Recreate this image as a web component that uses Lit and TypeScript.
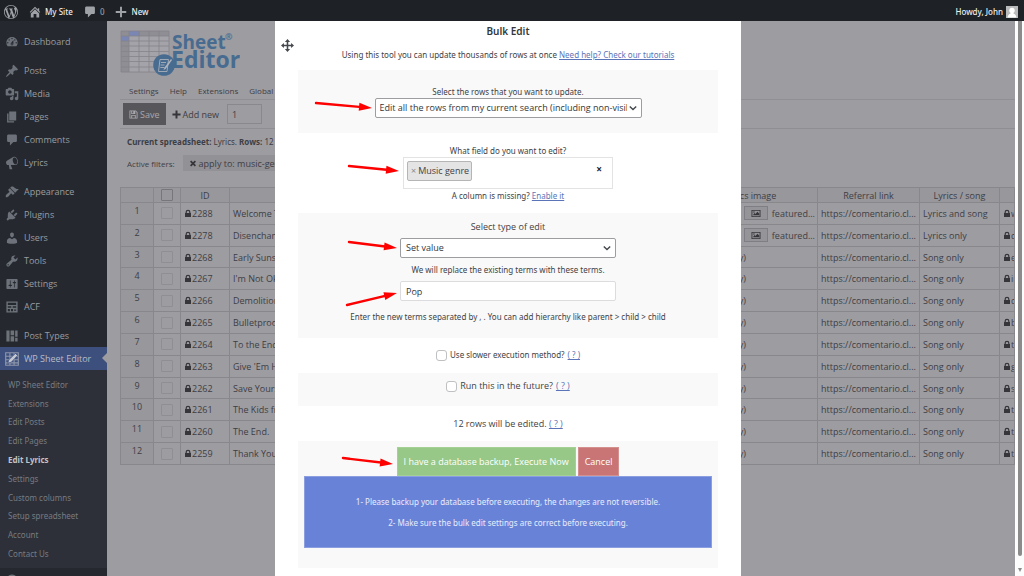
import { LitElement, html, css, svg } from "lit";
import { customElement } from "lit/decorators.js";
import { classMap } from "lit/directives/class-map.js";

const GLYPHS: Record<string, string> = {
  wordpress: "M20 10c0-5.51-4.49-10-10-10C4.48 0 0 4.49 0 10c0 5.52 4.48 10 10 10 5.51 0 10-4.48 10-10zM7.78 15.37L4.37 6.22c.55-.02 1.17-.08 1.17-.08.5-.06.44-1.13-.06-1.11 0 0-1.45.11-2.37.11-.18 0-.37 0-.58-.01C4.12 2.69 6.87 1.11 10 1.11c2.33 0 4.45.87 6.05 2.34-.68-.11-1.65.39-1.65 1.58 0 .74.45 1.36.9 2.1.35.61.55 1.36.55 2.46 0 1.49-1.4 5-1.4 5l-3.03-8.37c.54-.02.82-.17.82-.17.5-.05.44-1.25-.06-1.22 0 0-1.44.12-2.38.12-.87 0-2.33-.12-2.33-.12-.5-.03-.56 1.2-.06 1.22l.92.08 1.26 3.41zM17.41 10c.24-.64.74-1.87.43-4.25.7 1.29 1.05 2.71 1.05 4.25 0 3.29-1.73 6.24-4.4 7.78.97-2.59 1.94-5.2 2.92-7.78zM6.1 18.09C3.12 16.65 1.11 13.53 1.11 10c0-1.3.23-2.48.72-3.59C3.25 10.3 4.67 14.2 6.1 18.09zm4.03-6.63l2.58 6.98c-.86.29-1.76.45-2.71.45-.79 0-1.57-.11-2.29-.33.81-2.38 1.62-4.74 2.42-7.1z",
  home: "M16 8.5l1.53 1.53-1.06 1.06L10 4.6l-6.47 6.49-1.06-1.06L10 2.5l4 4v-2h2v4zm-6-2.46l6 5.99V18H12v-5H8v5H4v-5.97z",
  plus: "M17.5 8.6v2.8h-6.1v6.1H8.6v-6.1H2.5V8.6h6.1V2.5h2.8v6.1z",
  dashboard: "M3.76 16h12.48c1.1-1.37 1.76-3.11 1.76-5 0-4.42-3.58-8-8-8s-8 3.58-8 8c0 1.89.66 3.63 1.76 5zM10 4c.55 0 1 .45 1 1s-.45 1-1 1-1-.45-1-1 .45-1 1-1zM6 6c.55 0 1 .45 1 1s-.45 1-1 1-1-.45-1-1 .45-1 1-1zm8 0c.55 0 1 .45 1 1s-.45 1-1 1-1-.45-1-1 .45-1 1-1zm-5.37 5.55L12 7v6c0 1.1-.9 2-2 2s-2-.9-2-2c0-.57.24-1.08.63-1.45zM4 10c.55 0 1 .45 1 1s-.45 1-1 1-1-.45-1-1 .45-1 1-1zm12 0c.55 0 1 .45 1 1s-.45 1-1 1-1-.45-1-1 .45-1 1-1zm-5 3c0-.55-.45-1-1-1s-1 .45-1 1 .45 1 1 1 1-.45 1-1z",
  post: "M10.44 3.02l1.82-1.82 6.36 6.35-1.83 1.82c-1.05-.68-2.48-.57-3.41.36l-.75.75c-.92.93-1.04 2.35-.35 3.41l-1.83 1.82-2.41-2.41-2.8 2.79c-.42.42-3.38 2.71-3.8 2.29s1.86-3.39 2.28-3.81l2.79-2.79L4.1 9.36l1.83-1.82c1.05.69 2.48.57 3.4-.36l.75-.75c.93-.92 1.05-2.35.36-3.41z",
  media: "M13 11V4c0-.55-.45-1-1-1h-1.67L9 1H5L3.67 3H2c-.55 0-1 .45-1 1v7c0 .55.45 1 1 1h10c.55 0 1-.45 1-1zM7 4.5c1.38 0 2.5 1.12 2.5 2.5S8.38 9.5 7 9.5 4.5 8.38 4.5 7 5.62 4.5 7 4.5zM14 6h5v10.5c0 1.38-1.12 2.5-2.5 2.5S14 17.88 14 16.5s1.12-2.5 2.5-2.5c.17 0 .34.02.5.05V9h-3V6zm-4 8.05V13h2v3.5c0 1.38-1.12 2.5-2.5 2.5S7 17.88 7 16.5 8.12 14 9.5 14c.17 0 .34.02.5.05z",
  page: "M6 15V2h10v13H6zm-1 1h8v2H3V5h2v11z",
  comment: "M5 2h10c1.1 0 2 .9 2 2v7c0 1.1-.9 2-2 2h-3l-5 5v-5H5c-1.1 0-2-.9-2-2V4c0-1.1.9-2 2-2z",
  megaphone: "M18.15 5.94c.46 1.62.38 3.22-.02 4.48-.42 1.28-1.26 2.18-2.3 2.48-.16.06-.26.06-.4.06-.06.02-.12.02-.18.02-.06.02-.14.02-.22.02h-6.8l2.22 5.5c.02.14-.06.26-.14.34-.08.1-.24.16-.34.16H6.95c-.1 0-.26-.06-.34-.16-.08-.08-.16-.2-.14-.34l-1-5.5H4.25l-.02-.02c-.5.06-1.08-.18-1.54-.62s-.88-1.08-1.06-1.88c-.24-.8-.2-1.56-.02-2.2.18-.62.58-1.08 1.06-1.3l.02-.02 9-5.4c.1-.06.18-.1.24-.16.06-.04.14-.08.24-.12.16-.08.28-.12.5-.18 1.04-.3 2.24.1 3.22.98s1.84 2.24 2.26 3.86zm-2.58 5.98h-.02c.4-.1.74-.34 1.04-.7.58-.7.86-1.76.86-3.04 0-.64-.1-1.3-.28-1.98-.34-1.36-1.02-2.5-1.78-3.24s-1.68-1.1-2.46-.88c-.82.22-1.4.96-1.7 2-.32 1.04-.28 2.36.06 3.72.38 1.36 1 2.5 1.8 3.24.78.74 1.62 1.1 2.48.88z",
  brush: "M14.48 11.06L7.41 3.99l1.5-1.5c.5-.56 2.3-.47 3.51.32 1.21.8 1.43 1.28 2.91 2.1 1.18.64 2.45 1.26 4.45.85zm-.71.71L6.7 4.7 4.93 6.47c-.39.39-.39 1.02 0 1.41l1.06 1.06c.39.39.39 1.03 0 1.42-.6.6-1.43 1.11-2.21 1.69-.35.26-.7.53-1.01.84C1.43 14.23.4 16.08 1.4 17.07c.99 1 2.84-.03 4.18-1.36.31-.31.58-.66.85-1.02.57-.78 1.08-1.61 1.69-2.21.39-.39 1.02-.39 1.41 0l1.06 1.06c.39.39 1.02.39 1.41 0z",
  plugin: "M13.11 4.36L9.87 7.6 8 5.73l3.24-3.24c.35-.34 1.05-.2 1.56.32.52.51.66 1.21.31 1.55zm-8 1.77l.91-1.12 9.01 9.01-1.19.84c-.71.71-2.63 1.16-3.82 1.16H6.14L4.9 17.26c-.59.59-1.54.59-2.12 0-.59-.58-.59-1.53 0-2.12l1.24-1.24v-3.88c0-1.13.4-3.19 1.09-3.89zm7.26 3.97l3.24-3.24c.34-.35 1.04-.21 1.55.31.52.51.66 1.21.31 1.55l-3.24 3.25z",
  user: "M10 9.25c-2.27 0-2.73-3.44-2.73-3.44C7 4.02 7.82 2 9.97 2c2.16 0 2.98 2.02 2.71 3.81 0 0-.41 3.44-2.68 3.44zm0 2.57L12.72 10c2.39 0 4.52 2.33 4.52 4.53v2.49s-3.65 1.13-7.24 1.13c-3.65 0-7.24-1.13-7.24-1.13v-2.49c0-2.25 1.94-4.48 4.47-4.48z",
  wrench: "M16.68 9.77c-1.34 1.34-3.3 1.67-4.95.99l-5.41 6.52c-.99.99-2.59.99-3.58 0s-.99-2.59 0-3.57l6.52-5.42c-.68-1.65-.35-3.61.99-4.95 1.28-1.28 3.12-1.62 4.72-1.06l-2.89 2.89 2.82 2.82 2.86-2.87c.53 1.58.18 3.39-1.08 4.65zM3.81 16.21c.4.39 1.04.39 1.43 0 .4-.4.4-1.04 0-1.43-.39-.4-1.03-.4-1.43 0-.39.39-.39 1.03 0 1.43z",
  sliders: "M18 16V4c0-.55-.45-1-1-1H3c-.55 0-1 .45-1 1v12c0 .55.45 1 1 1h14c.55 0 1-.45 1-1zM8 11h1c.55 0 1 .45 1 1s-.45 1-1 1H8v1.5c0 .28-.22.5-.5.5s-.5-.22-.5-.5V13H6c-.55 0-1-.45-1-1s.45-1 1-1h1V5.5c0-.28.22-.5.5-.5s.5.22.5.5V11zm5-2h-1c-.55 0-1-.45-1-1s.45-1 1-1h1V5.5c0-.28.22-.5.5-.5s.5.22.5.5V7h1c.55 0 1 .45 1 1s-.45 1-1 1h-1v5.5c0 .28-.22.5-.5.5s-.5-.22-.5-.5V9z",
  fields: "M2 2h16v16H2zM4 4v3h12V4zM4 9v2h5V9zM11 9v2h5V9zM4 13v3h3v-3zM8.500 13v3h3v-3zM13 13.500v2h3v-2z",
  layout: "M2 2h4.500v16H2zM8 2h5v7H8zM14.500 2H18v9h-3.500zM8 10.500h5V18H8zM14.500 12.500H18V18h-3.500z",
  lock: "M4 9V6.500a6 6 0 0 1 12 0V9h1.500v10h-15V9zM7 9h6V6.500a3 3 0 0 0-6 0z",
  cross: "M5.500 2.500L10 7l4.500-4.500 3 3L13 10l4.500 4.500-3 3L10 13l-4.500 4.500-3-3L7 10 2.500 5.500z",
  bold_plus: "M19 7.800v4.400h-6.800V19H7.800v-6.800H1V7.800h6.800V1h4.400v6.800z",
  circle: "M10 3a7 7 0 1 0 .01 0z",
  save: "M1 1h14l4 4v14H1zM3 3v14h2v-6h10v6h2V6l-2.500-3H14v6H5V3zM7 3v4h2.500V3zM7 13v4h6v-4z",
  move: "M10 0l4 4.500h-2.800v4.300h4.300V6L20 10l-4.500 4v-2.800h-4.300v4.300H14L10 20l-4-4.500h2.800v-4.300H4.500V14L0 10l4.500-4v2.800h4.300V4.500H6z",
  image: "M0 2h20v16H0zM2 4v12h16V4zM4 14v-2l3-3 2 2 4-5 4 4v4zM5.500 5a1.600 1.600 0 1 1 0 3.200 1.600 1.600 0 0 1 0-3.200z",
  collapse: "M10 2a8 8 0 1 0 .01 0zM8.500 6v8l5-4z",
};

const icon = (name: string) => html`
  <svg class="icon" viewBox="0 0 20 20" aria-hidden="true">
    <path fill-rule="evenodd" d=${GLYPHS[name]}></path>
  </svg>`;

@customElement("admin-bar")
class AdminBar extends LitElement {
  static styles = css`
    :host { display: flex; align-items: center; justify-content: space-between; height: 21px; background: #1e2226;
      font: 8px/12px "Noto Sans", "Open Sans", sans-serif; }
    .group { display: flex; align-items: center; gap: 10px; padding: 2px 0 0 4px; }
    .right { padding: 2px 6px 0 0; }
    a { display: flex; align-items: center; gap: 3px; color: #eceded; text-decoration: none; font-weight: 500; }
    .muted { color: #9a9da0; }
    .icon { width: 14px; height: 14px; fill: #9fa3a7; }
    .avatar { width: 12px; height: 12px; }
  `;
  render() {
    return html`
      <nav class="group" aria-label="Toolbar">
        <a href="#" aria-label="WordPress">${icon("wordpress")}</a>
        <a href="#">${icon("home")}My Site</a>
        <a href="#" class="muted">${icon("comment")}0</a>
        <a href="#">${icon("plus")}New</a>
      </nav>
      <a href="#" class="right">Howdy, John
        <svg class="avatar" viewBox="0 0 12 12" aria-hidden="true">
          <rect width="12" height="12" fill="#b9babb"></rect>
          <circle cx="6" cy="4.500" r="2.700" fill="#fff"></circle>
          <path d="M1.500 11.500C2 8.500 3.500 8 5 7h2c1.500 1 3 1.500 3.500 4.500z" fill="#fff"></path>
        </svg>
      </a>`;
  }
}

const MENU = [
  [["dashboard", "Dashboard"]],
  [["post", "Posts"], ["media", "Media"], ["page", "Pages"], ["comment", "Comments"], ["megaphone", "Lyrics"]],
  [["brush", "Appearance"], ["plugin", "Plugins"], ["user", "Users"], ["wrench", "Tools"], ["sliders", "Settings"], ["fields", "ACF"]],
  [["layout", "Post Types"], ["sheet", "WP Sheet Editor"]],
];
const SUBMENU = ["WP Sheet Editor", "Extensions", "Edit Posts", "Edit Pages", "Edit Lyrics", "Settings",
  "Custom columns", "Setup spreadsheet", "Account", "Contact Us"];

@customElement("admin-menu")
class AdminMenu extends LitElement {
  static styles = css`
    :host { display: block; width: 107px; flex: none; background: #25292f; overflow: hidden; padding-top: 9px;
      box-sizing: border-box; font: 9px/13px "Open Sans", "Noto Sans", sans-serif; }
    ul { list-style: none; margin: 0; padding: 0; }
    .menu { display: grid; gap: 6px; }
    a { color: #999ca1; text-decoration: none; display: flex; align-items: center; }
    .item { height: 23px; gap: 5px; padding-left: 5px; white-space: nowrap; position: relative; }
    .icon { width: 14px; height: 14px; fill: #6d727a; flex: none; }
    .active { background: #3c4f7d; color: #b9bdc6; }
    .active::after { content: ""; position: absolute; right: 0; top: 6px; border: 5px solid transparent;
      border-right-color: #9d9ca1; border-left-width: 0; }
    .submenu { box-sizing: border-box; height: 198px; padding: 5px 8px; display: grid; grid-auto-rows: 1fr;
      background: #2d3038; font-size: 8px; font-family: "Noto Sans", sans-serif; }
    .submenu a { height: 100%; color: #777b82; }
    .submenu .current { color: #c3c4c7; font-weight: 700; }
  `;
  private sheetIcon() {
    return html`<svg class="icon" viewBox="0 0 20 20" aria-hidden="true">
      ${svg`<path d="M1 1h18v18H1zM1 6h18M1 11h18M1 15.500h18M7 1v18M13 1v18" fill="none" stroke="#8f97ab" stroke-width="1.600"></path>
      <path d="M4 16l1.500-5L15 2l3 3-9 9.500z" fill="#c3c7d0" stroke="#3c4f7d" stroke-width="1"></path>`}
    </svg>`;
  }
  render() {
    return html`
      <nav aria-label="Main menu">
        <div class="menu">
          ${MENU.map((group) => html`<ul>${group.map(([glyph, label]) => html`
            <li><a href="#" class=${classMap({ item: true, active: glyph === "sheet" })}>
              ${glyph === "sheet" ? this.sheetIcon() : icon(glyph)}${label}</a></li>`)}</ul>`)}
        </div>
        <ul class="submenu">
          ${SUBMENU.map((label) => html`<li><a href="#" class=${classMap({ current: label === "Edit Lyrics" })}>${label}</a></li>`)}
        </ul>
        <a href="#" class="item" aria-label="Collapse menu">${icon("collapse")}</a>
      </nav>`;
  }
}

const SONGS: [string, string, string, string][] = [
  ["2288", "Welcome To The Black Parade", "Lyrics and song", "w"],
  ["2278", "Disenchanted", "Lyrics only", "d"],
  ["2268", "Early Sunsets Over", "Song only", "e"],
  ["2267", "I'm Not Okay", "Song only", "in"],
  ["2266", "Demolition Lovers", "Song only", "d"],
  ["2265", "Bulletproof Heart", "Song only", "b"],
  ["2264", "To the End", "Song only", "to"],
  ["2263", "Give 'Em Hell, Kid", "Song only", "g"],
  ["2262", "Save Yourself", "Song only", "s"],
  ["2261", "The Kids from Yesterday", "Song only", "th"],
  ["2260", "The End.", "Song only", "th"],
  ["2259", "Thank You for the Venom", "Song only", "th"],
];

@customElement("sheet-page")
class SheetPage extends LitElement {
  static styles = css`
    :host { display: block; flex: 1; min-width: 0; overflow: hidden; background: #9d9ca1; color: #3e3e44;
      font: 9px/13px "Open Sans", "Noto Sans", sans-serif; padding: 8px 0 0 13px; box-sizing: border-box; white-space: nowrap; }
    a { color: inherit; text-decoration: none; }
    .icon { width: 9px; height: 9px; fill: #35353a; flex: none; }
    .logo { display: block; width: 120px; height: 48px; }
    .logo text { font-family: "Open Sans", sans-serif; font-weight: 700; fill: #486b90; }
    .tabs { display: flex; gap: 11px; padding: 7px 9px 2px; font-size: 8px; border-bottom: 1px solid #918f95; }
    .tools { display: flex; align-items: center; gap: 6px; height: 28px; padding-left: 3px; border-bottom: 1px solid #8f8e93; }
    button { font: inherit; color: inherit; border: 0; margin: 0; padding: 0; background: none; display: flex;
      align-items: center; gap: 2px; }
    .tools .save { background: #57565b; color: #a9a8ad; height: 22px; padding: 0 6px; }
    .save .icon { fill: #a9a8ad; }
    .count { box-sizing: border-box; width: 35px; height: 20px; border: 1px solid #89888e; background: #9d9ca1;
      color: #3e3e44; font: inherit; padding: 0 4px; border-radius: 0; margin-left: 2px; }
    .lookup { margin-left: 6px; }
    .status { padding: 6px 7px 7px; font-size: 8px; font-family: "Noto Sans", sans-serif; }
    .filters { display: flex; align-items: center; gap: 8px; padding-left: 7px; height: 16px; }
    .caption { font-size: 8px; }
    .chip { background: #929196; height: 16px; padding: 0 6px; }
    .chip .icon { width: 8px; }
    .sheet { border-collapse: collapse; table-layout: fixed; width: 100%; height: 278px; margin-top: 16px; }
    th, td { border: 1px solid #88878c; padding: 0 0 0 3px; overflow: hidden; font-weight: 400; text-align: left; }
    thead th { height: 14px; text-align: center; background: #98979c; padding: 0; }
    tbody th { text-align: center; vertical-align: top; background: #98979c; padding: 1px 0 0; }
    .c-num { width: 33px; } .c-tick { width: 27px; } .c-id { width: 49px; } .c-img { width: 134px; }
    .c-link { width: 102px; } .c-kind { width: 80px; } .c-slug { width: 15px; }
    .tick { padding: 0; text-align: center; }
    .tick input { appearance: none; box-sizing: border-box; display: block; width: 12px; height: 12px; margin: 0 auto;
      border: 1px solid #8f8e93; border-radius: 1px; }
    thead .tick input { border-color: #77767c; }
    .locked { display: flex; align-items: center; }
    .locked .icon { width: 8px; height: 9px; }
    .picture { display: flex; align-items: center; justify-content: flex-end; gap: 4px; padding-right: 2px; }
    .none { padding-right: 71px; }
    .thumb { justify-content: center; width: 24px; height: 14px; box-sizing: border-box; border: 1px solid #7f7e84; background: #959499; }
    .thumb .icon { width: 10px; height: 9px; }
  `;
  render() {
    return html`
      <svg class="logo" viewBox="0 0 120 48" role="img" aria-label="Sheet Editor">
        <rect x="1" y="2" width="48" height="41" fill="#a4a3a9"></rect>
        <rect x="1" y="2" width="8" height="41" fill="#8f8e94"></rect>
        <rect x="1" y="2" width="48" height="5" fill="#8f8e94"></rect>
        <path d="M9 2h11v5H9zM1 7h8v5H1z" fill="#7a86b4"></path>
        <path d="M1 2h48v41H1zM1 7h48M1 12h48M1 17h48M1 22.500h48M1 27.500h48M1 32.500h48M1 38h48M9 2v41M19 2v41M29 2v41M39 2v41"
          fill="none" stroke="#85848a" stroke-width="0.800"></path>
        <circle cx="44" cy="36" r="10.800" fill="#486b90"></circle>
        <path d="M40 30.500h8.500l-1.500 12h-8.500zM41 33.500h5M40.500 36h4M40.300 38.500h4" fill="none" stroke="#9fa8b5" stroke-width="1"></path>
        <path d="M51 30l-6.500 8.500-1 2.500 2.300-1.200L52 31z" fill="#b0b6bf"></path>
        <text x="52" y="20" font-size="19">Sheet</text>
        <text x="105" y="11" font-size="9">®</text>
        <text x="51" y="39" font-size="23">Editor</text>
      </svg>
      <nav class="tabs" aria-label="Spreadsheet">
        <a href="#">Settings</a><a href="#">Help</a><a href="#">Extensions</a><a href="#">Global search</a>
      </nav>
      <div class="tools">
        <button class="save">${icon("save")}Save</button>
        <button>${icon("bold_plus")}Add new</button>
        <input class="count" aria-label="Number of rows to add" value="1">
        <button class="lookup" aria-label="Add">${icon("circle")}</button>
      </div>
      <div class="status"><b>Current spreadsheet:</b> Lyrics. <b>Rows:</b> 12</div>
      <div class="filters"><span class="caption">Active filters:</span><button class="chip">${icon("cross")}apply to: music-genre</button></div>
      <table class="sheet">
        <colgroup><col class="c-num"><col class="c-tick"><col class="c-id"><col><col class="c-img"><col class="c-link"><col class="c-kind"><col class="c-slug"></colgroup>
        <thead><tr>
          <th></th><th class="tick"><input type="checkbox" aria-label="Select all rows"></th><th>ID</th><th></th>
          <th>Lyrics image</th><th>Referral link</th><th>Lyrics / song</th><th></th>
        </tr></thead>
        <tbody>
          ${SONGS.map(([id, title, kind, slug], i) => html`<tr>
            <th>${i + 1}</th>
            <td class="tick"><input type="checkbox" aria-label="Select row ${i + 1}"></td>
            <td><div class="locked">${icon("lock")}${id}</div></td>
            <td>${title}</td>
            <td>${i < 2
              ? html`<div class="picture"><button class="thumb" aria-label="View image">${icon("image")}</button>featured...</div>`
              : html`<div class="picture none">(empty)</div>`}</td>
            <td>https://comentario.cl...</td>
            <td>${kind}</td>
            <td><div class="locked">${icon("lock")}${slug}</div></td>
          </tr>`)}
        </tbody>
      </table>`;
  }
}

@customElement("bulk-edit")
class BulkEdit extends LitElement {
  static styles = css`
    :host { display: block; position: relative; box-sizing: border-box; width: 466px; max-width: 100%; padding: 3px 23px 0;
      background: #fff; color: #3e4246; text-align: center; font: 8px/12px "Noto Sans", "Open Sans", sans-serif; }
    h2 { margin: 0; font-size: 10px; line-height: 14px; font-weight: 600; color: #33373b; }
    p { margin: 0; }
    a { color: #5b74b8; }
    .large { font-size: 9px; font-family: "Open Sans", sans-serif; }
    .intro { margin: 11px 0 9px; }
    .move { position: absolute; left: 6px; top: 18px; width: 13px; height: 13px; padding: 0; border: 0; background: none; }
    .icon { display: block; width: 13px; height: 13px; fill: #44484c; }
    label { display: block; }
    .panel { background: #f9f9f9; }
    .rows { padding: 16px 0 15px; }
    .picker { position: relative; margin: 0 auto; }
    .picker.long { width: 267px; }
    .picker.short, .value { width: 216px; }
    select, .value { appearance: none; box-sizing: border-box; height: 20px; margin: 0; font: inherit; font-size: 9px;
      font-family: "Open Sans", sans-serif; color: #33373b; background: #fff; border: 1px solid #9c9da0; border-radius: 2px;
      padding: 0 14px 0 4px; display: block; }
    .picker.short select, .value { padding-left: 5px; }
    select { width: 100%; }
    .chevron { position: absolute; right: 5px; top: 6px; width: 8px; height: 8px; fill: none; stroke: #44484c; stroke-width: 1.7;
      pointer-events: none; }
    .field { padding: 12px 0 11px; }
    .tags { display: flex; justify-content: space-between; align-items: flex-start; box-sizing: border-box; width: 210px;
      height: 32px; margin: 0 auto 1px; padding: 3px 10px 0 3px; border: 1px solid #e3e3e3; }
    .tag { display: flex; align-items: center; gap: 2px; box-sizing: border-box; height: 20px; padding: 0 2px 0 3px;
      border: 1px solid #b5b5b5; border-radius: 2px; background: #e4e4e4; font-size: 9px; font-family: "Open Sans", sans-serif; }
    .tags button { border: 0; padding: 0; background: none; font: inherit; color: #8b8b8b; }
    .tags .clear { color: #222; font-weight: 700; font-size: 10px; padding-top: 2px; }
    .type { padding: 7px 0 15px; }
    .type .large { line-height: 13px; margin-bottom: 5px; }
    .note { margin: 6px 0 5px; }
    .value { margin: 0 auto 10px; border-color: #dcdcde; }
    .check { display: flex; justify-content: center; align-items: center; gap: 3px; }
    .check input { appearance: none; box-sizing: border-box; width: 11px; height: 11px; margin: 0; border: 1px solid #bfc0c2;
      border-radius: 3px; background: #fff; }
    .slow { padding: 11px 0 12px; }
    .future { padding: 7px 0 14px; }
    .total { margin: 12px 0 11px; }
    .confirm { padding: 6px 6px 20px; }
    .actions { display: flex; justify-content: center; gap: 2px; }
    .actions button { height: 29px; margin: 0; padding: 0 6px; border: 1px solid #a4d096; background: #97c888; color: #fff;
      font: inherit; font-size: 9px; font-family: "Open Sans", sans-serif; }
    .actions .cancel { background: #c97575; border-color: #d48f8f; }
    .warning { box-sizing: border-box; height: 72px; background: #6882d8; border: 1px solid #8a9ee0; color: #e9edfb;
      padding-top: 19px; display: grid; align-content: start; gap: 9px; }
    .arrows { position: absolute; left: 0; top: 0; width: 100%; height: 100%; pointer-events: none; fill: #fe0000; stroke: #fe0000; }
  `;
  private arrow(x1: number, y1: number, x2: number, y2: number) {
    const len = Math.hypot(x2 - x1, y2 - y1);
    const deg = (Math.atan2(y2 - y1, x2 - x1) * 180) / Math.PI;
    return svg`<g transform="translate(${x1} ${y1}) rotate(${deg})">
      <path d="M0 0H${len - 10}" stroke-width="2.400" stroke-linecap="round"></path>
      <path d="M${len} 0l-13-4v8z" stroke="none"></path></g>`;
  }
  private chevron() {
    return html`<svg class="chevron" viewBox="0 0 10 10" aria-hidden="true"><path d="M1 3l4 4 4-4"></path></svg>`;
  }
  render() {
    return html`
      <button class="move" aria-label="Move window">${icon("move")}</button>
      <h2>Bulk Edit</h2>
      <p class="intro">Using this tool you can update thousands of rows at once <a href="#">Need help? Check our tutorials</a></p>
      <div class="panel rows">
        <label for="rows">Select the rows that you want to update.</label>
        <div class="picker long">
          <select id="rows"><option>Edit all the rows from my current search (including non-visible rows)</option></select>
          ${this.chevron()}
        </div>
      </div>
      <div class="field">
        <div id="field-label">What field do you want to edit?</div>
        <div class="tags" role="group" aria-labelledby="field-label">
          <span class="tag"><button aria-label="Remove Music genre">×</button>Music genre</span>
          <button class="clear" aria-label="Clear">×</button>
        </div>
        <p>A column is missing? <a href="#">Enable it</a></p>
      </div>
      <div class="panel type">
        <label class="large" for="type">Select type of edit</label>
        <div class="picker short">
          <select id="type"><option>Set value</option></select>
          ${this.chevron()}
        </div>
        <label class="note" for="value">We will replace the existing terms with these terms.</label>
        <input id="value" class="value" value="Pop">
        <p>Enter the new terms separated by , . You can add hierarchy like parent &gt; child &gt; child</p>
      </div>
      <div class="check slow">
        <input type="checkbox" id="slow"><label for="slow">Use slower execution method?</label><a href="#">( ? )</a>
      </div>
      <div class="panel check future large">
        <input type="checkbox" id="future"><label for="future">Run this in the future?</label><a href="#">( ? )</a>
      </div>
      <p class="total large">12 rows will be edited. <a href="#">( ? )</a></p>
      <div class="panel confirm">
        <div class="actions"><button>I have a database backup, Execute Now</button><button class="cancel">Cancel</button></div>
        <div class="warning">
          <p>1- Please backup your database before executing, the changes are not reversible.</p>
          <p>2- Make sure the bulk edit settings are correct before executing.</p>
        </div>
      </div>
      <svg class="arrows" aria-hidden="true">
        ${this.arrow(41, 82, 97, 87)}
        ${this.arrow(74, 145, 124, 150)}
        ${this.arrow(74, 221, 122, 227)}
        ${this.arrow(72, 284, 122, 272)}
        ${this.arrow(68, 437, 118, 443)}
      </svg>`;
  }
}

@customElement("app-root")
class AppRoot extends LitElement {
  static styles = css`
    :host { display: flex; flex-direction: column; height: 100vh; overflow: hidden; position: relative; }
    .body { flex: 1; display: flex; min-height: 0; }
    .scroll { width: 9px; flex: none; box-sizing: border-box; background: #fcfcfc; border-left: 1px solid #fff; display: flex;
      flex-direction: column; align-items: center; }
    .thumb { width: 4px; flex: 1; background: #8b8b8b; border-radius: 0 0 2px 2px; margin-bottom: 12px; }
    .down { border: 2px solid transparent; border-top: 4px solid #8b8b8b; border-bottom: 0; margin-bottom: 4px; }
    .overlay { position: absolute; inset: 21px 8px 0 0; display: flex; justify-content: center; }
  `;
  render() {
    return html`
      <admin-bar></admin-bar>
      <div class="body">
        <admin-menu></admin-menu>
        <sheet-page></sheet-page>
        <div class="scroll"><div class="thumb"></div><div class="down"></div></div>
      </div>
      <div class="overlay"><bulk-edit role="dialog" aria-label="Bulk Edit"></bulk-edit></div>`;
  }
}
